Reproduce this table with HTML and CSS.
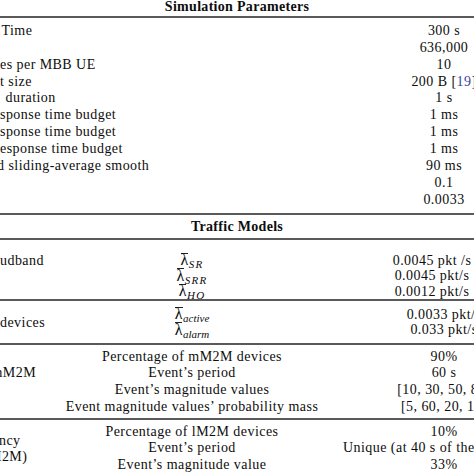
FILE: index.html
```html
<!DOCTYPE html>
<html lang="en">
<head>
<meta charset="utf-8">
<title>Simulation Parameters and Traffic Models</title>
<link rel="stylesheet" href="styles.css">
</head>
<body>
<div class="sheet">
  <div class="caption">Simulation Parameters</div>
  <div class="rule"></div>
  <div class="params">
    <div class="lbl ind-2">Time</div><div class="val">300 s</div>
    <div class="lbl"></div><div class="val">636,000</div>
    <div class="lbl">es per MBB UE</div><div class="val">10</div>
    <div class="lbl">t size</div><div class="val">200 B [<span class="cite">19</span>]</div>
    <div class="lbl ind-6">duration</div><div class="val">1 s</div>
    <div class="lbl">sponse time budget</div><div class="val">1 ms</div>
    <div class="lbl">sponse time budget</div><div class="val">1 ms</div>
    <div class="lbl">esponse time budget</div><div class="val">1 ms</div>
    <div class="lbl cut-3">d sliding-average smooth</div><div class="val">90 ms</div>
    <div class="lbl"></div><div class="val">0.1</div>
    <div class="lbl"></div><div class="val">0.0033</div>
  </div>
  <div class="rule"></div>
  <div class="caption caption-second">Traffic Models</div>
  <div class="rule rule-tight"></div>

  <div class="group group-mbb">
    <div class="glabel row-1">udband</div>
    <div class="param"><span class="lam"><span class="bar">λ</span><span class="sub sub-caps">SR</span></span></div>
    <div class="val val-shift">0.0045 pkt /s</div>
    <div class="param"><span class="lam"><span class="bar">λ</span><span class="sub sub-caps">SRR</span></span></div>
    <div class="val val-shift">0.0045 pkt/s</div>
    <div class="param"><span class="lam"><span class="bar">λ</span><span class="sub sub-caps">HO</span></span></div>
    <div class="val val-shift">0.0012 pkt/s</div>
  </div>
  <div class="rule"></div>

  <div class="group group-dev">
    <div class="glabel span-2">devices</div>
    <div class="param"><span class="lam"><span class="bar">λ</span><span class="sub">active</span></span></div>
    <div class="val">0.0033 pkt/s</div>
    <div class="param"><span class="lam"><span class="bar">λ</span><span class="sub">alarm</span></span></div>
    <div class="val">0.033 pkt/s</div>
  </div>
  <div class="rule"></div>

  <div class="group group-m2m">
    <div class="glabel row-2"><span class="cut-m">mM2M</span></div>
    <div class="param">Percentage of mM2M devices</div>
    <div class="val">90%</div>
    <div class="param">Event’s period</div>
    <div class="val">60 s</div>
    <div class="param">Event’s magnitude values</div>
    <div class="val">[10, 30, 50, 80]</div>
    <div class="param">Event magnitude values’ probability mass</div>
    <div class="val">[5, 60, 20, 15]</div>
  </div>
  <div class="rule"></div>

  <div class="group group-lm2m">
    <div class="glabel span-3">
      <div class="ll ll-1">ncy</div>
      <div class="ll ll-2">M2M)</div>
    </div>
    <div class="param">Percentage of lM2M devices</div>
    <div class="val">10%</div>
    <div class="param">Event’s period</div>
    <div class="val">Unique (at 40 s of the simulation)</div>
    <div class="param">Event’s magnitude value</div>
    <div class="val">33%</div>
  </div>
</div>
</body>
</html>
```

FILE: styles.css
```css
html, body {
  margin: 0;
  padding: 0;
  overflow: hidden;
  background: #ffffff;
}

.sheet {
  width: 545px;
  margin-top: -2.5px;
  font-family: "Liberation Serif", "Times New Roman", serif;
  font-size: 14px;
  letter-spacing: 0.45px;
  color: #0d0d0d;
  white-space: nowrap;
}

.caption {
  width: 474px;
  text-align: center;
  font-weight: bold;
  letter-spacing: 0.3px;
  line-height: 17px;
  height: 17px;
}

.caption-second {
  margin-top: 3.5px;
}

.rule {
  height: 2px;
  background: #5a5a5a;
  margin-top: 1.5px;
}

.rule-tight {
  margin-top: 2.5px;
}

.params + .rule,
.group + .rule {
  margin-top: 0;
}

/* Simulation parameters */
.params {
  display: grid;
  grid-template-columns: 343px 202px;
  grid-auto-rows: 16.85px;
  line-height: 16.85px;
  padding: 5.07px 0 4.6px;
}

.ind-2 { padding-left: 1.5px; }
.ind-6 { padding-left: 5.5px; }
.cut-3 { margin-left: -3px; }

.val {
  text-align: center;
}

.cite {
  color: #3a45a8;
}

/* Traffic model groups */
.group {
  display: grid;
  grid-template-columns: 52px 280px 213px;
}

.group .param {
  grid-column: 2;
  text-align: center;
}

.group .val {
  grid-column: 3;
  padding-left: 11px;
}

.group .val-shift {
  padding-right: 24px;
}

.glabel {
  grid-column: 1;
}

.row-1 { grid-row: 1; }
.row-2 { grid-row: 2; }
.span-2 { grid-row: 1 / span 2; align-self: center; }
.span-3 { grid-row: 1 / span 3; align-self: center; }

.group-mbb {
  grid-auto-rows: 15.5px;
  line-height: 15.5px;
  padding: 12.75px 0 0;
}

.group-dev {
  grid-auto-rows: 15.5px;
  line-height: 15.5px;
  padding: 5.75px 0 5px;
}

.group-m2m {
  grid-auto-rows: 16.67px;
  line-height: 16.67px;
  padding: 3.67px 0 2.67px;
}

.group-lm2m {
  grid-auto-rows: 16.67px;
  line-height: 16.67px;
  padding: 3.67px 0 0;
}

.cut-m {
  display: inline-block;
  margin-left: -8.5px;
}

.ll {
  line-height: 16px;
}

.ll-1 { margin-left: -1px; }
.ll-2 { margin-left: -11px; }

/* Lambda with overline and subscript */
.lam {
  display: inline-block;
  letter-spacing: 0;
}

.bar {
  display: inline-block;
  font-size: 16px;
  line-height: 10px;
  padding-top: 1.5px;
  border-top: 1px solid #222222;
}

.sub {
  font-style: italic;
  font-size: 11px;
  line-height: 0;
  vertical-align: -3px;
  margin-left: 0.5px;
}

.sub-caps {
  font-size: 11px;
  letter-spacing: 1.2px;
}
```
